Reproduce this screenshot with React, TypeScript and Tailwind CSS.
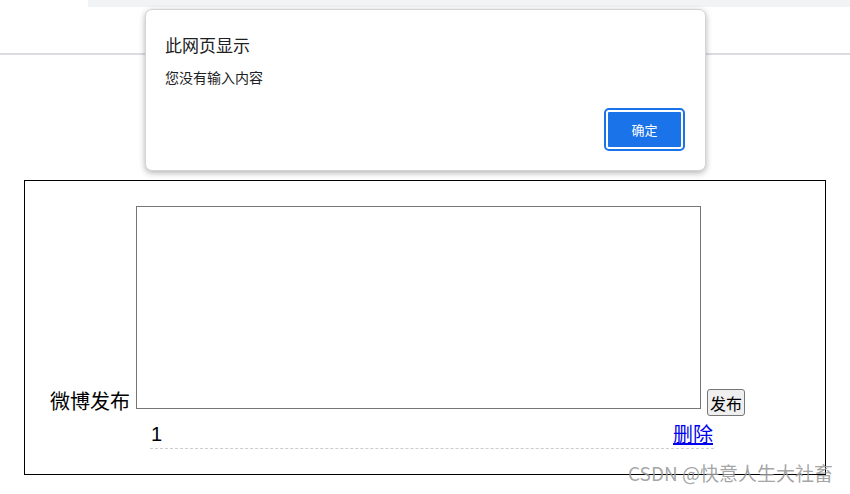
const cjk = { fontFamily: '"Noto Sans CJK SC", "Liberation Sans", sans-serif' };

function AlertDialog() {
  return (
    <div
      className="absolute left-[145px] top-[9px] w-[561px] h-[162px] bg-white rounded-[7px] border border-[#d4d4d4] shadow-[0_2px_6px_rgba(0,0,0,0.3)]"
      style={cjk}
    >
      <div className="pl-[19px] pt-[23px] text-[17px] leading-[24px] text-[#202124]">此网页显示</div>
      <div className="pl-[19px] pt-[10px] text-[14px] leading-[20px] text-[#202124]">您没有输入内容</div>
      <div className="flex justify-end pr-[20px] pt-[21px]">
        <button className="w-[81px] h-[43px] rounded-[5px] bg-[#1a73e8] text-white text-[13px] border-2 border-[#1a73e8] outline outline-2 outline-white -outline-offset-4">
          确定
        </button>
      </div>
    </div>
  );
}

export default function App() {
  return (
    <div className="relative w-[850px] h-[494px] bg-white overflow-hidden" style={cjk}>
      <div className="flex h-[7px]">
        <div className="w-[88px] bg-white" />
        <div className="flex-1 bg-[#f1f3f4]" />
      </div>
      <div className="h-[48px] border-b-2 border-[#dadce0]" />

      <div className="ml-[24px] mt-[125px] w-[802px] h-[295px] border border-black">
        <div className="flex items-end pt-[25px]">
          <span className="pl-[25px] pr-[6px] mb-[-5px] text-[20px] leading-[26px] text-black">微博发布</span>
          <textarea className="w-[565px] h-[203px] border border-[#767676] resize-none outline-none" />
          <button className="ml-[6px] mb-[-7px] h-[27px] px-[2px] border border-[#767676] rounded-[3px] bg-[#efefef] text-[16px] leading-[22px] text-black">
            发布
          </button>
        </div>
        <ul className="ml-[125px] mt-[10px] w-[564px]">
          <li className="flex justify-between items-center h-[30px] border-b border-dashed border-[#cccccc] text-[20px] leading-[26px]">
            <span className="pl-[1px] text-black" style={{ fontFamily: '"Liberation Sans", sans-serif' }}>1</span>
            <a href="#" className="mr-[1px] text-[#0000ee] underline">删除</a>
          </li>
        </ul>
      </div>

      <div className="absolute right-[17px] top-[461px] text-[19px] leading-[24px] text-[#9a9a9a]/90">
        CSDN @快意人生大社畜
      </div>

      <AlertDialog />
    </div>
  );
}
